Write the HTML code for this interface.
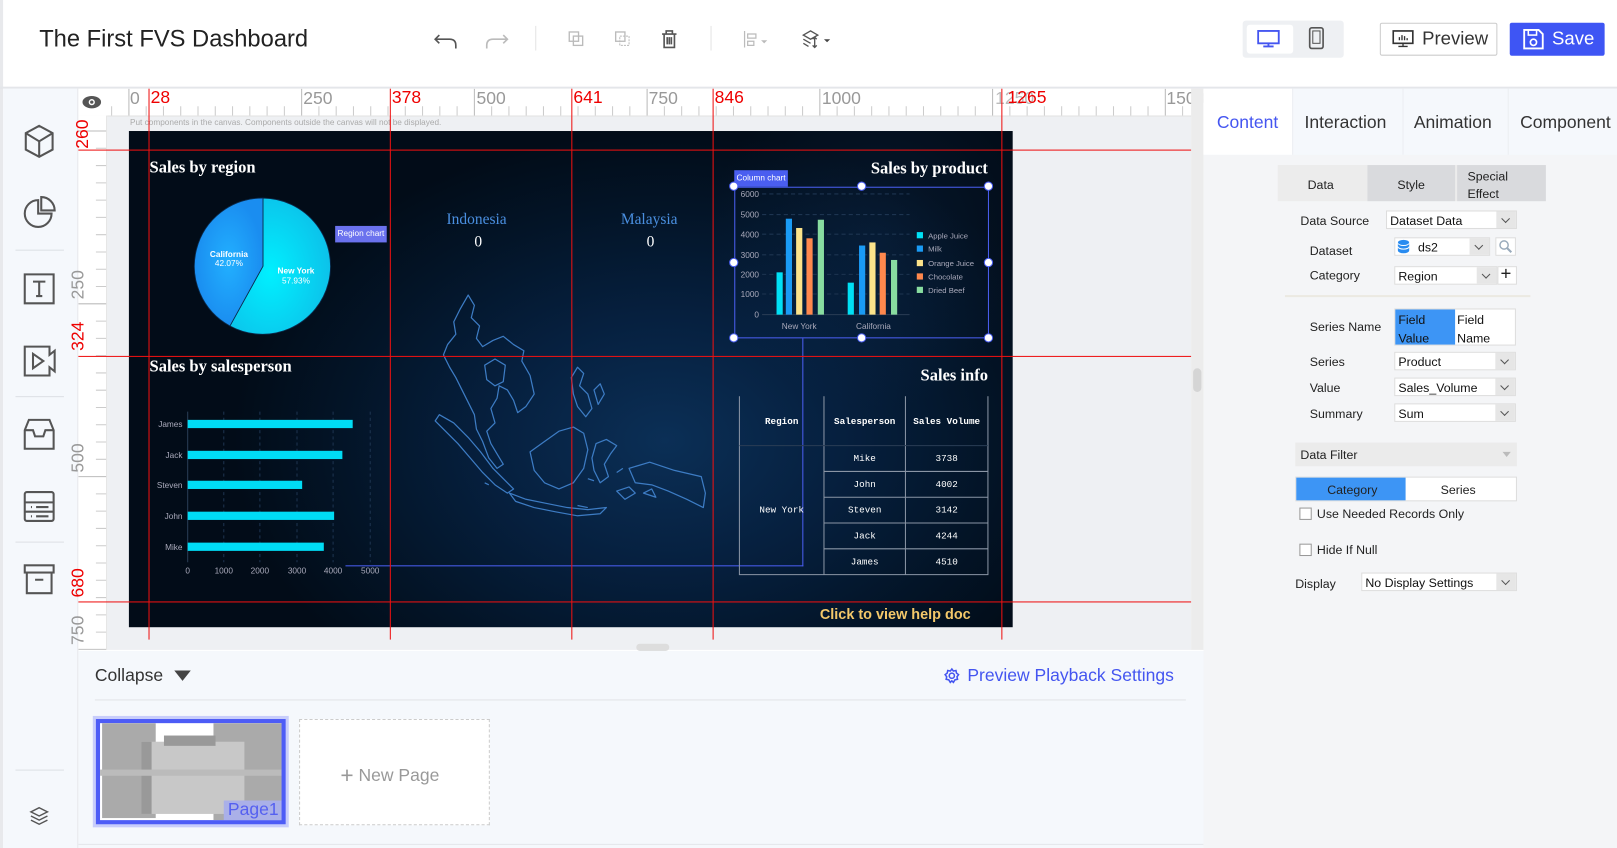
<!DOCTYPE html>
<html><head><meta charset="utf-8">
<style>
html,body{margin:0;padding:0;width:1617px;height:848px;overflow:hidden;background:#fff;font-family:"Liberation Sans",sans-serif;}
#w{position:absolute;left:0;top:0;width:1568px;height:822px;transform-origin:0 0;transform:scale(1.03125,1.0316);overflow:hidden;background:#fff;}
.a{position:absolute;}
.t{position:absolute;white-space:nowrap;}
.serif{font-family:"Liberation Serif",serif;}
.rl{position:absolute;color:#999;font-size:17px;}
.rr{position:absolute;color:#e00;font-size:17px;}
.vl{position:absolute;width:1px;background:#e11;}
.hl{position:absolute;height:1px;background:#e11;}
.lab{position:absolute;font-size:12px;color:#222;}
.sel{position:absolute;background:#fff;border:1px solid #ddd;height:18px;font-size:12px;line-height:18px;padding-left:3px;box-sizing:border-box;color:#111;}
.sel .ar{position:absolute;right:0;top:0;width:19px;height:16px;background:#e6e6e6;}
.sel .ar:after{content:"";position:absolute;left:6px;top:4px;width:5px;height:5px;border-right:1px solid #555;border-bottom:1px solid #555;transform:rotate(45deg);}
.h{position:absolute;width:9px;height:9px;border-radius:50%;background:#fff;border:1.5px solid #4a5ef0;box-sizing:border-box;}
.td{position:absolute;font-family:"Liberation Mono",monospace;font-size:9px;color:#fff;text-align:center;}
</style></head><body><div id="w">

<!-- header -->
<div class="a" style="left:0;top:0;width:3px;height:822px;background:#e8e9ec"></div>
<div class="t" style="left:38px;top:24px;font-size:23px;color:#222">The First FVS Dashboard</div>
<svg class="a" style="left:420px;top:25px" width="400" height="28" viewBox="0 0 400 28" fill="none">
 <path d="M6 9 L2 13 L6 17 M2 13 H16 Q22 13 22 19 V22" stroke="#555" stroke-width="1.6"/>
 <path d="M68 9 L72 13 L68 17 M72 13 H58 Q52 13 52 19 V22" stroke="#bbb" stroke-width="1.6"/>
 <rect x="99" y="0" width="1" height="24" fill="#e5e5e5"/>
 <rect x="132" y="6" width="9" height="9" stroke="#bbb" stroke-width="1.3"/><rect x="136" y="10" width="9" height="9" stroke="#bbb" stroke-width="1.3"/>
 <rect x="177" y="6" width="9" height="9" stroke="#bbb" stroke-width="1.3"/><rect x="181" y="10" width="9" height="9" stroke="#bbb" stroke-width="1" stroke-dasharray="2 1"/>
 <path d="M222 8 H236 M226 8 V5 H232 V8 M224 8 V21 H234 V8 M227 11 V18 M229 11 V18 M231 11 V18" stroke="#555" stroke-width="1.6"/>
 <rect x="269" y="0" width="1" height="24" fill="#e5e5e5"/>
 <path d="M302 5 V21 M305 8 H313 V12 H305 Z M305 15 H311 V19 H305 Z" stroke="#bbb" stroke-width="1.2"/>
 <path d="M318 14 L321 17 L324 14 Z" fill="#bbb"/>
 <path d="M359 9 L366 5 L373 9 L366 13 Z M359 13 L366 17 M359 17 L364 20 M370 11 V21 M368 13 L370 11 L372 13 M368 19 L370 21 L372 19" stroke="#555" stroke-width="1.3"/>
 <path d="M379 13 L382 16 L385 13 Z" fill="#444"/>
</svg>
<div class="a" style="left:1205px;top:20px;width:98px;height:36px;background:#eef0f3;border-radius:3px"></div>
<div class="a" style="left:1209px;top:24px;width:45px;height:28px;background:#fff;border-radius:3px"></div>
<svg class="a" style="left:1219px;top:28px" width="24" height="20" fill="none"><rect x="1" y="2" width="20" height="12" stroke="#4455f0" stroke-width="1.8"/><path d="M6 17 H16 M11 14 V17" stroke="#4455f0" stroke-width="1.8"/></svg>
<svg class="a" style="left:1268px;top:26px" width="18" height="24" fill="none"><rect x="2" y="1" width="13" height="20" rx="2" stroke="#555" stroke-width="1.6"/><rect x="5" y="4" width="7" height="12" stroke="#555" stroke-width="1"/></svg>
<div class="a" style="left:1338px;top:22px;width:114px;height:32px;border:1px solid #ccc;box-sizing:border-box;border-radius:2px;background:#fff"></div>
<svg class="a" style="left:1350px;top:29px" width="22" height="19" fill="none"><rect x="1" y="1" width="19" height="12" stroke="#333" stroke-width="1.6"/><path d="M6 16 H15 M10.5 13 V16 M7 10 V7 M9.5 10 V5 M12 10 V6 M14.5 10 V8" stroke="#333" stroke-width="1.3"/></svg>
<div class="t" style="left:1379px;top:27px;font-size:18px;color:#333">Preview</div>
<div class="a" style="left:1464px;top:22px;width:92px;height:32px;background:#3e55f4;border-radius:2px"></div>
<svg class="a" style="left:1476px;top:27px" width="22" height="22" fill="none"><path d="M2 2 H16 L20 6 V20 H2 Z" stroke="#fff" stroke-width="1.8"/><rect x="6" y="2" width="8" height="5" stroke="#fff" stroke-width="1.5"/><circle cx="11" cy="14" r="3" stroke="#fff" stroke-width="1.6"/></svg>
<div class="t" style="left:1505px;top:27px;font-size:18px;color:#fff">Save</div>
<div class="a" style="left:0;top:84px;width:1568px;height:2px;background:#e4e6ea"></div>

<!-- left sidebar -->
<div class="a" style="left:3px;top:86px;width:72px;height:736px;background:#f5f8fc"></div>
<div class="a" style="left:75px;top:86px;width:1px;height:736px;background:#e4e6ea"></div>
<div class="a" style="left:15px;top:242px;width:47px;height:1px;background:#dde0e5"></div>
<div class="a" style="left:15px;top:384px;width:47px;height:1px;background:#dde0e5"></div>
<div class="a" style="left:15px;top:525px;width:47px;height:1px;background:#dde0e5"></div>
<div class="a" style="left:15px;top:746px;width:47px;height:1px;background:#dde0e5"></div>
<svg class="a" style="left:20px;top:118px" width="36" height="460" fill="none" stroke="#555" stroke-width="2">
 <path d="M18 4 L31 11 V27 L18 34 L5 27 V11 Z M5 11 L18 19 L31 11 M18 19 V34"/>
 <g transform="translate(0,70)"><path d="M17 6 A13 13 0 1 0 30 19 H17 Z"/><path d="M20 3 A13 13 0 0 1 33 16 H20 Z"/></g>
 <g transform="translate(0,142)"><path d="M8 6 H4 V34 H8 M28 6 H32 V34 H28 M4 6 H32 M4 34 H32"/><path d="M12 13 H24 M18 13 V27 M15 27 H21"/></g>
 <g transform="translate(0,212)"><path d="M4 6 H28 V14 L33 10 V30 L28 26 V34 H4 Z" /><path d="M12 13 L22 20 L12 27 Z"/></g>
 <g transform="translate(0,283)"><path d="M8 6 H28 L32 16 V34 H4 V16 Z M4 16 H12 L14 22 H22 L24 16 H32"/></g>
 <g transform="translate(0,354)"><rect x="4" y="5" width="28" height="28" rx="2"/><path d="M4 15 H32 M4 24 H32 M10 19.5 H11 M15 19.5 H27 M10 28.5 H11 M15 28.5 H27"/></g>
 <g transform="translate(0,425)"><rect x="4" y="5" width="28" height="7"/><path d="M6 12 V32 H30 V12 M14 19 H22"/></g>
</svg>
<svg class="a" style="left:28px;top:781px" width="20" height="20" fill="none" stroke="#555" stroke-width="1.4"><path d="M10 2 L18 6 L10 10 L2 6 Z M2 10 L10 14 L18 10 M2 14 L10 18 L18 14"/></svg>

<!-- ruler -->
<div class="a" style="left:76px;top:86px;width:1079px;height:26px;background:#fff;border-bottom:1px solid #e0e0e0"></div>
<div class="a" style="left:76px;top:112px;width:27px;height:518px;background:#fff;border-right:1px solid #e0e0e0"></div>
<svg class="a" style="left:78px;top:91px" width="22" height="16"><ellipse cx="11" cy="8" rx="9" ry="6" fill="#555"/><circle cx="11" cy="8" r="3" fill="#fff"/><circle cx="11" cy="8" r="1.6" fill="#555"/></svg>
<svg class="a" style="left:103px;top:86px" width="1052" height="26" id="rt"></svg>
<svg class="a" style="left:76px;top:112px" width="27" height="518" id="rlft"></svg>
<div class="rl" style="left:126px;top:86px">0</div>
<div class="rl" style="left:294px;top:86px">250</div>
<div class="rl" style="left:462px;top:86px">500</div>
<div class="rl" style="left:629px;top:86px">750</div>
<div class="rl" style="left:797px;top:86px">1000</div>
<div class="rl" style="left:965px;top:86px;color:#bbb">1250</div>
<div class="rl" style="left:1131px;top:86px">1500</div>
<div class="rr" style="left:146px;top:85px">28</div>
<div class="rr" style="left:380px;top:85px">378</div>
<div class="rr" style="left:556px;top:85px">641</div>
<div class="rr" style="left:693px;top:85px">846</div>
<div class="rr" style="left:977px;top:85px">1265</div>
<div class="rl" style="left:62px;top:266px;transform:rotate(-90deg);transform-origin:center">250</div>
<div class="rl" style="left:62px;top:434px;transform:rotate(-90deg)">500</div>
<div class="rl" style="left:62px;top:601px;transform:rotate(-90deg)">750</div>
<div class="rr" style="left:66px;top:120px;transform:rotate(-90deg)">260</div>
<div class="rr" style="left:62px;top:316px;transform:rotate(-90deg)">324</div>
<div class="rr" style="left:62px;top:555px;transform:rotate(-90deg)">680</div>

<!-- canvas area -->
<div class="a" style="left:104px;top:113px;width:1051px;height:517px;background:#eef0f3"></div>
<div class="a" style="left:1155px;top:86px;width:12px;height:544px;background:#ececec"></div>
<div class="a" style="left:1157px;top:357px;width:8px;height:23px;background:#d5d5d5;border-radius:4px"></div>
<div class="t" style="left:126px;top:114px;font-size:8px;color:#aaa">Put components in the canvas. Components outside the canvas will not be displayed.</div>
<div class="a" style="left:617px;top:624px;width:32px;height:7px;background:#ddd;border-radius:4px"></div>

<div class="a" style="left:125px;top:127px;width:857px;height:481px;overflow:hidden;background:radial-gradient(ellipse 420px 300px at 520px 300px,#0b2f56 0%,#06203f 40%,#031427 75%,#020c18 100%)">
 <div class="a" style="left:560px;top:-60px;width:330px;height:330px;border-radius:50%;background:radial-gradient(circle,rgba(20,60,110,0.25),rgba(20,60,110,0.0) 70%)"></div>
</div>

<!-- map -->
<svg class="a" style="left:410px;top:278px" width="290" height="230" fill="none" stroke="#3d7cc4" stroke-width="1.2" stroke-linejoin="round">
 <path d="M44 8 L50 18 L47 30 L55 38 L52 50 L58 58 L68 52 L78 48 L88 56 L98 62 L96 72 L104 86 L108 104 L100 116 L92 122 L88 110 L82 100 L74 96 L72 108 L66 118 L70 132 L62 140 L66 152 L72 162 L78 172 L72 176 L64 166 L58 150 L52 138 L50 124 L44 112 L38 100 L32 88 L26 78 L20 66 L24 56 L32 46 L30 34 L36 22 Z"/>
 <path d="M60 76 L70 70 L80 76 L78 92 L70 96 L62 90 Z"/>
 <path d="M16 124 L30 132 L44 146 L56 160 L68 176 L80 188 L88 196 L82 200 L70 192 L58 180 L46 166 L34 152 L22 140 L12 130 Z"/>
 <path d="M84 200 L100 206 L120 210 L140 214 L160 216 L178 214 L172 220 L150 222 L128 218 L108 214 L90 208 Z"/>
 <path d="M104 160 L118 150 L132 140 L146 136 L156 142 L160 158 L156 176 L146 190 L132 196 L118 190 L108 178 Z"/>
 <path d="M168 152 L178 148 L188 154 L182 162 L176 172 L180 184 L172 190 L166 178 L164 166 Z"/>
 <path d="M144 88 L150 78 L156 84 L152 96 L160 104 L164 118 L158 126 L150 116 L146 104 Z"/>
 <path d="M166 100 L172 94 L176 104 L170 114 Z"/>
 <path d="M200 176 L220 170 L244 178 L270 184 L274 200 L272 214 L256 206 L238 198 L222 192 L206 190 Z"/>
 <path d="M188 198 L200 194 L206 200 L196 206 Z M214 200 L222 196 L226 204 Z M150 212 L160 214 M60 190 L64 192"/>
 <path d="M188 180 L194 176 M160 186 L166 188"/>
</svg>

<!-- pie -->
<div class="t serif" style="left:145px;top:154px;font-size:16px;font-weight:bold;color:#fff">Sales by region</div>
<svg class="a" style="left:185px;top:188px" width="140" height="140">
 <defs><radialGradient id="g1" cx="50%" cy="50%" r="50%"><stop offset="0" stop-color="#22b0ff"/><stop offset="1" stop-color="#1a8df0"/></radialGradient>
 <radialGradient id="g2" cx="40%" cy="55%" r="60%"><stop offset="0" stop-color="#00f0ff"/><stop offset="1" stop-color="#0cc2ea"/></radialGradient></defs>
 <path d="M70 70 L70 4 A66 66 0 1 1 38 128 Z" fill="url(#g2)" stroke="#0a2b4d" stroke-width="0.8"/>
 <path d="M70 70 L38 128 A66 66 0 0 1 70 4 Z" fill="url(#g1)" stroke="#0a2b4d" stroke-width="0.8"/>
 <text x="37" y="61" fill="#fff" font-size="8" font-weight="bold" text-anchor="middle" font-family="Liberation Sans">California</text>
 <text x="37" y="70" fill="#fff" font-size="8" text-anchor="middle" font-family="Liberation Sans">42.07%</text>
 <text x="102" y="77" fill="#fff" font-size="8" font-weight="bold" text-anchor="middle" font-family="Liberation Sans">New York</text>
 <text x="102" y="87" fill="#fff" font-size="8" text-anchor="middle" font-family="Liberation Sans">57.93%</text>
</svg>
<div class="t" style="left:325px;top:219px;width:50px;height:16px;background:#6b72ee;color:#fff;font-size:8px;line-height:16px;text-align:center">Region chart</div>

<div class="t serif" style="left:433px;top:205px;font-size:15px;color:#4a8fe0">Indonesia</div>
<div class="t serif" style="left:460px;top:227px;font-size:15px;color:#fff">0</div>
<div class="t serif" style="left:602px;top:205px;font-size:15px;color:#4a8fe0">Malaysia</div>
<div class="t serif" style="left:627px;top:227px;font-size:15px;color:#fff">0</div>

<!-- column chart -->
<div class="t serif" style="left:790px;top:155px;width:168px;text-align:right;font-size:16px;font-weight:bold;color:#fff">Sales by product</div>
<div class="t" style="left:712px;top:165px;width:52px;height:16px;background:#4a5ef0;color:#fff;font-size:8px;line-height:16px;text-align:center">Column chart</div>
<div class="a" style="left:712px;top:181px;width:247px;height:147px;border:1.5px solid #4a5ef0;box-sizing:border-box"></div>
<svg class="a" style="left:712px;top:181px" width="180" height="145" font-family="Liberation Sans" font-size="8" fill="#aab">
 <g stroke="#1d3450" stroke-dasharray="4 3"><line x1="27" y1="7" x2="170" y2="7"/><line x1="27" y1="27" x2="170" y2="27"/><line x1="27" y1="46" x2="170" y2="46"/><line x1="27" y1="66" x2="170" y2="66"/><line x1="27" y1="85" x2="170" y2="85"/><line x1="27" y1="104" x2="170" y2="104"/></g>
 <line x1="27" y1="124" x2="170" y2="124" stroke="#2a3d55"/>
 <g text-anchor="end"><text x="24" y="10">6000</text><text x="24" y="30">5000</text><text x="24" y="49">4000</text><text x="24" y="69">3000</text><text x="24" y="88">2000</text><text x="24" y="107">1000</text><text x="24" y="127">0</text></g>
 <rect x="41" y="83" width="6" height="41" fill="#00e0f5"/><rect x="50" y="31" width="6" height="93" fill="#1a9bf5"/><rect x="60" y="40" width="6" height="84" fill="#fce38a"/><rect x="70" y="50" width="6" height="74" fill="#ff884d"/><rect x="81" y="32" width="6" height="92" fill="#88dca0"/>
 <rect x="110" y="93" width="6" height="31" fill="#00e0f5"/><rect x="121" y="57" width="6" height="67" fill="#1a9bf5"/><rect x="131" y="54" width="6" height="70" fill="#fce38a"/><rect x="141" y="64" width="6" height="60" fill="#ff884d"/><rect x="152" y="71" width="6" height="53" fill="#88dca0"/>
 <text x="63" y="138" text-anchor="middle">New York</text><text x="135" y="138" text-anchor="middle">California</text>
</svg>
<svg class="a" style="left:888px;top:222px" width="70" height="65" font-family="Liberation Sans" font-size="7.5" fill="#aab">
 <rect x="1" y="3" width="6" height="6" fill="#00e0f5"/><text x="12" y="9">Apple Juice</text>
 <rect x="1" y="16" width="6" height="6" fill="#1a9bf5"/><text x="12" y="22">Milk</text>
 <rect x="1" y="30" width="6" height="6" fill="#fce38a"/><text x="12" y="36">Orange Juice</text>
 <rect x="1" y="43" width="6" height="6" fill="#ff884d"/><text x="12" y="49">Chocolate</text>
 <rect x="1" y="56" width="6" height="6" fill="#88dca0"/><text x="12" y="62">Dried Beef</text>
</svg>
<div class="h" style="left:707px;top:176px"></div><div class="h" style="left:831px;top:176px"></div><div class="h" style="left:954px;top:176px"></div>
<div class="h" style="left:707px;top:250px"></div><div class="h" style="left:954px;top:250px"></div>
<div class="h" style="left:707px;top:323px"></div><div class="h" style="left:831px;top:323px"></div><div class="h" style="left:954px;top:323px"></div>

<!-- blue selection line -->
<div class="a" style="left:778px;top:328px;width:1px;height:221px;background:#4a5ef0"></div>
<div class="a" style="left:335px;top:548px;width:444px;height:1px;background:#4a5ef0"></div>

<!-- bar chart -->
<div class="t serif" style="left:145px;top:347px;font-size:16px;font-weight:bold;color:#fff">Sales by salesperson</div>
<svg class="a" style="left:140px;top:395px" width="240" height="170" font-family="Liberation Sans" font-size="8" fill="#aab">
 <g stroke="#1d3450" stroke-dasharray="3 3"><line x1="77" y1="4" x2="77" y2="150"/><line x1="112" y1="4" x2="112" y2="150"/><line x1="148" y1="4" x2="148" y2="150"/><line x1="183" y1="4" x2="183" y2="150"/><line x1="219" y1="4" x2="219" y2="150"/></g>
 <line x1="42" y1="4" x2="42" y2="150" stroke="#2a3d55"/>
 <g fill="#00dcf5"><rect x="42" y="12" width="160" height="8"/><rect x="42" y="42" width="150" height="8"/><rect x="42" y="71" width="111" height="8"/><rect x="42" y="101" width="142" height="8"/><rect x="42" y="131" width="132" height="8"/></g>
 <g text-anchor="end"><text x="37" y="19">James</text><text x="37" y="49">Jack</text><text x="37" y="78">Steven</text><text x="37" y="108">John</text><text x="37" y="138">Mike</text></g>
 <g text-anchor="middle"><text x="42" y="161">0</text><text x="77" y="161">1000</text><text x="112" y="161">2000</text><text x="148" y="161">3000</text><text x="183" y="161">4000</text><text x="219" y="161">5000</text></g>
</svg>

<!-- table -->
<div class="t serif" style="left:860px;top:356px;width:98px;text-align:right;font-size:16px;font-weight:bold;color:#fff">Sales info</div>
<svg class="a" style="left:716px;top:384px" width="244" height="176" fill="none" stroke="#8a95a5" stroke-width="1">
 <path d="M1 0 V173 H242 V0 M83 0 V173 M162 0 V173 M83 73 H242 M83 98 H242 M83 123 H242 M83 148 H242"/>
 <path d="M1 48 H242" stroke="#2a3d55"/>
</svg>
<div class="td" style="left:717px;top:404px;width:82px;font-weight:bold">Region</div>
<div class="td" style="left:799px;top:404px;width:79px;font-weight:bold">Salesperson</div>
<div class="td" style="left:878px;top:404px;width:80px;font-weight:bold">Sales Volume</div>
<div class="td" style="left:717px;top:490px;width:82px">New York</div>
<div class="td" style="left:799px;top:440px;width:79px">Mike</div><div class="td" style="left:878px;top:440px;width:80px">3738</div>
<div class="td" style="left:799px;top:465px;width:79px">John</div><div class="td" style="left:878px;top:465px;width:80px">4002</div>
<div class="td" style="left:799px;top:490px;width:79px">Steven</div><div class="td" style="left:878px;top:490px;width:80px">3142</div>
<div class="td" style="left:799px;top:515px;width:79px">Jack</div><div class="td" style="left:878px;top:515px;width:80px">4244</div>
<div class="td" style="left:799px;top:540px;width:79px">James</div><div class="td" style="left:878px;top:540px;width:80px">4510</div>
<div class="t" style="left:795px;top:587px;font-size:14px;font-weight:bold;color:#f3c86a">Click to view help doc</div>

<!-- red guide lines -->
<div class="vl" style="left:144px;top:86px;height:534px"></div>
<div class="vl" style="left:378px;top:86px;height:534px"></div>
<div class="vl" style="left:554px;top:86px;height:534px"></div>
<div class="vl" style="left:691px;top:86px;height:534px"></div>
<div class="vl" style="left:971px;top:86px;height:534px"></div>
<div class="hl" style="left:76px;top:145px;width:1079px"></div>
<div class="hl" style="left:76px;top:345px;width:1079px"></div>
<div class="hl" style="left:76px;top:583px;width:1079px"></div>

<!-- bottom panel -->
<div class="a" style="left:76px;top:631px;width:1091px;height:191px;background:#f5f8fc"></div>
<div class="t" style="left:92px;top:645px;font-size:17px;color:#333">Collapse</div>
<div class="a" style="left:169px;top:650px;width:0;height:0;border-left:8px solid transparent;border-right:8px solid transparent;border-top:10px solid #444"></div>
<svg class="a" style="left:915px;top:647px" width="16" height="16" fill="none" stroke="#4455f0" stroke-width="1.5"><circle cx="8" cy="8" r="2.5"/><path d="M8 1.5 L9.5 3.5 L12 3 L12.5 5.5 L14.5 7 L13 9 L13.5 11.5 L11 12 L9.5 14.5 L8 13 L6.5 14.5 L5 12 L2.5 11.5 L3 9 L1.5 7 L3.5 5.5 L4 3 L6.5 3.5 Z"/></svg>
<div class="t" style="left:938px;top:645px;font-size:17px;color:#4455f0">Preview Playback Settings</div>
<div class="a" style="left:92px;top:678px;width:1058px;height:1px;background:#e2e4e8"></div>
<div class="a" style="left:90px;top:694px;width:190px;height:108px;background:#c8cdfb"></div>
<div class="a" style="left:93px;top:697px;width:184px;height:102px;background:#4d5cf6"></div>
<div class="a" style="left:97px;top:701px;width:176px;height:94px;background:#fff;overflow:hidden">
 <div class="a" style="left:2px;top:0;width:52px;height:92px;background:#aaa"></div>
 <div class="a" style="left:110px;top:0;width:66px;height:94px;background:#aaa"></div>
 <div class="a" style="left:40px;top:18px;width:100px;height:70px;background:#c8c8c8"></div>
 <div class="a" style="left:62px;top:12px;width:50px;height:10px;background:#999"></div>
 <div class="a" style="left:40px;top:18px;width:10px;height:70px;background:#999"></div>
 <div class="a" style="left:0;top:45px;width:176px;height:6px;background:#bbb"></div>
 <div class="a" style="left:120px;top:75px;width:56px;height:19px;background:#aab0e8"></div>
</div>
<div class="t" style="left:221px;top:775px;font-size:17px;color:#5560f0">Page1</div>
<div class="a" style="left:290px;top:697px;width:185px;height:103px;border:1px dashed #ccc;box-sizing:border-box;background:#fff"></div>
<div class="t" style="left:330px;top:737px;font-size:17px;color:#999"><span style="font-size:22px;position:relative;top:2px">+</span> New Page</div>
<div class="a" style="left:76px;top:818px;width:1091px;height:1px;background:#e4e6ea"></div>

<!-- right panel -->
<div class="a" style="left:1167px;top:86px;width:401px;height:736px;background:#f4f5f7"></div>
<div class="a" style="left:1167px;top:86px;width:401px;height:64px;background:#f5f8fc"></div>
<div class="a" style="left:1167px;top:86px;width:86px;height:64px;background:#fff"></div>
<div class="a" style="left:1253px;top:86px;width:1px;height:64px;background:#eceef2"></div>
<div class="a" style="left:1360px;top:86px;width:1px;height:64px;background:#eceef2"></div>
<div class="a" style="left:1462px;top:86px;width:1px;height:64px;background:#eceef2"></div>
<div class="t" style="left:1180px;top:109px;font-size:17px;color:#4455f0">Content</div>
<div class="t" style="left:1265px;top:109px;font-size:17px;color:#333">Interaction</div>
<div class="t" style="left:1371px;top:109px;font-size:17px;color:#333">Animation</div>
<div class="t" style="left:1474px;top:109px;font-size:17px;color:#333">Component</div>
<div class="a" style="left:1239px;top:160px;width:260px;height:35px;background:#ececec"></div>
<div class="a" style="left:1326px;top:160px;width:85px;height:35px;background:#d9dadd"></div>
<div class="a" style="left:1413px;top:160px;width:86px;height:35px;background:#d9dadd"></div>
<div class="t" style="left:1268px;top:172px;font-size:12px;color:#222">Data</div>
<div class="t" style="left:1355px;top:172px;font-size:12px;color:#222">Style</div>
<div class="t" style="left:1423px;top:163px;font-size:12px;color:#222;line-height:17px">Special<br>Effect</div>

<div class="lab" style="left:1261px;top:207px">Data Source</div>
<div class="sel" style="left:1344px;top:204px;width:127px">Dataset Data<div class="ar"></div></div>
<div class="lab" style="left:1270px;top:236px">Dataset</div>
<div class="sel" style="left:1352px;top:230px;width:93px;padding-left:22px">ds2<div class="ar"></div></div>
<svg class="a" style="left:1355px;top:232px" width="12" height="14"><ellipse cx="6" cy="3" rx="5.5" ry="2.5" fill="#2a8cf0"/><path d="M0.5 4 V11 A5.5 2.5 0 0 0 11.5 11 V4 A5.5 2.5 0 0 1 0.5 4Z" fill="#2a8cf0"/><path d="M0.5 7 A5.5 2.5 0 0 0 11.5 7" stroke="#fff" fill="none"/></svg>
<div class="a" style="left:1450px;top:230px;width:20px;height:18px;background:#fff;border:1px solid #ddd;box-sizing:border-box"></div>
<svg class="a" style="left:1453px;top:232px" width="14" height="14" fill="none" stroke="#9ab" stroke-width="1.4"><circle cx="5.5" cy="5.5" r="4"/><path d="M8.5 8.5 L12.5 12.5" stroke-width="2"/></svg>
<div class="lab" style="left:1270px;top:260px">Category</div>
<div class="sel" style="left:1352px;top:258px;width:100px">Region<div class="ar"></div></div>
<div class="a" style="left:1452px;top:258px;width:19px;height:18px;background:#fff;border:1px solid #ddd;box-sizing:border-box"></div>
<div class="t" style="left:1455px;top:255px;font-size:18px;color:#222">+</div>
<div class="a" style="left:1246px;top:286px;width:238px;height:2px;background:#ebe9e2"></div>

<div class="lab" style="left:1270px;top:310px">Series Name</div>
<div class="a" style="left:1352px;top:299px;width:118px;height:36px;background:#fff;border:1px solid #ddd;box-sizing:border-box"></div>
<div class="a" style="left:1353px;top:300px;width:58px;height:34px;background:#3d95f5"></div>
<div class="t" style="left:1356px;top:301px;font-size:12px;color:#111;line-height:18px">Field<br>Value</div>
<div class="t" style="left:1413px;top:301px;font-size:12px;color:#111;line-height:18px">Field<br>Name</div>
<div class="lab" style="left:1270px;top:344px">Series</div>
<div class="sel" style="left:1352px;top:341px;width:118px">Product<div class="ar"></div></div>
<div class="lab" style="left:1270px;top:369px">Value</div>
<div class="sel" style="left:1352px;top:366px;width:118px">Sales_Volume<div class="ar"></div></div>
<div class="lab" style="left:1270px;top:394px">Summary</div>
<div class="sel" style="left:1352px;top:391px;width:118px">Sum<div class="ar"></div></div>
<div class="a" style="left:1256px;top:429px;width:215px;height:23px;background:#ebebeb"></div>
<div class="lab" style="left:1261px;top:434px">Data Filter</div>
<div class="a" style="left:1457px;top:438px;width:0;height:0;border-left:4px solid transparent;border-right:4px solid transparent;border-top:5px solid #bbb"></div>
<div class="a" style="left:1256px;top:462px;width:215px;height:24px;background:#fff;border:1px solid #ddd;box-sizing:border-box"></div>
<div class="a" style="left:1257px;top:463px;width:106px;height:22px;background:#3d95f5"></div>
<div class="lab" style="left:1287px;top:468px">Category</div>
<div class="lab" style="left:1397px;top:468px">Series</div>
<div class="a" style="left:1260px;top:492px;width:12px;height:12px;border:1px solid #999;background:#fff;box-sizing:border-box"></div>
<div class="lab" style="left:1277px;top:491px">Use Needed Records Only</div>
<div class="a" style="left:1260px;top:527px;width:12px;height:12px;border:1px solid #999;background:#fff;box-sizing:border-box"></div>
<div class="lab" style="left:1277px;top:526px">Hide If Null</div>
<div class="lab" style="left:1256px;top:559px">Display</div>
<div class="sel" style="left:1320px;top:555px;width:151px">No Display Settings<div class="ar"></div></div>

</div>
<script>
(function(){
 var s='';
 for(var u=0;u<=1600;u+=25){var x=22+u*0.67;if(x>1052)break;var major=(u%250==0);
  s+='<line x1="'+x+'" x2="'+x+'" y1="'+(major?0:17)+'" y2="26" stroke="'+(major?'#bbb':'#ccc')+'" stroke-width="1"/>';}
 for(var u=-25;u<0;u+=25){var x=22+u*0.67;s+='<line x1="'+x+'" x2="'+x+'" y1="17" y2="26" stroke="#ccc"/>';}
 document.getElementById('rt').innerHTML=s;
 s='';
 for(var u=0;u<=800;u+=25){var y=15+u*0.67;if(y>518)break;var major=(u%250==0);
  s+='<line y1="'+y+'" y2="'+y+'" x1="'+(major?0:17)+'" x2="27" stroke="'+(major?'#bbb':'#ccc')+'"/>';}
 document.getElementById('rlft').innerHTML=s;
})();
</script>
</body></html>
